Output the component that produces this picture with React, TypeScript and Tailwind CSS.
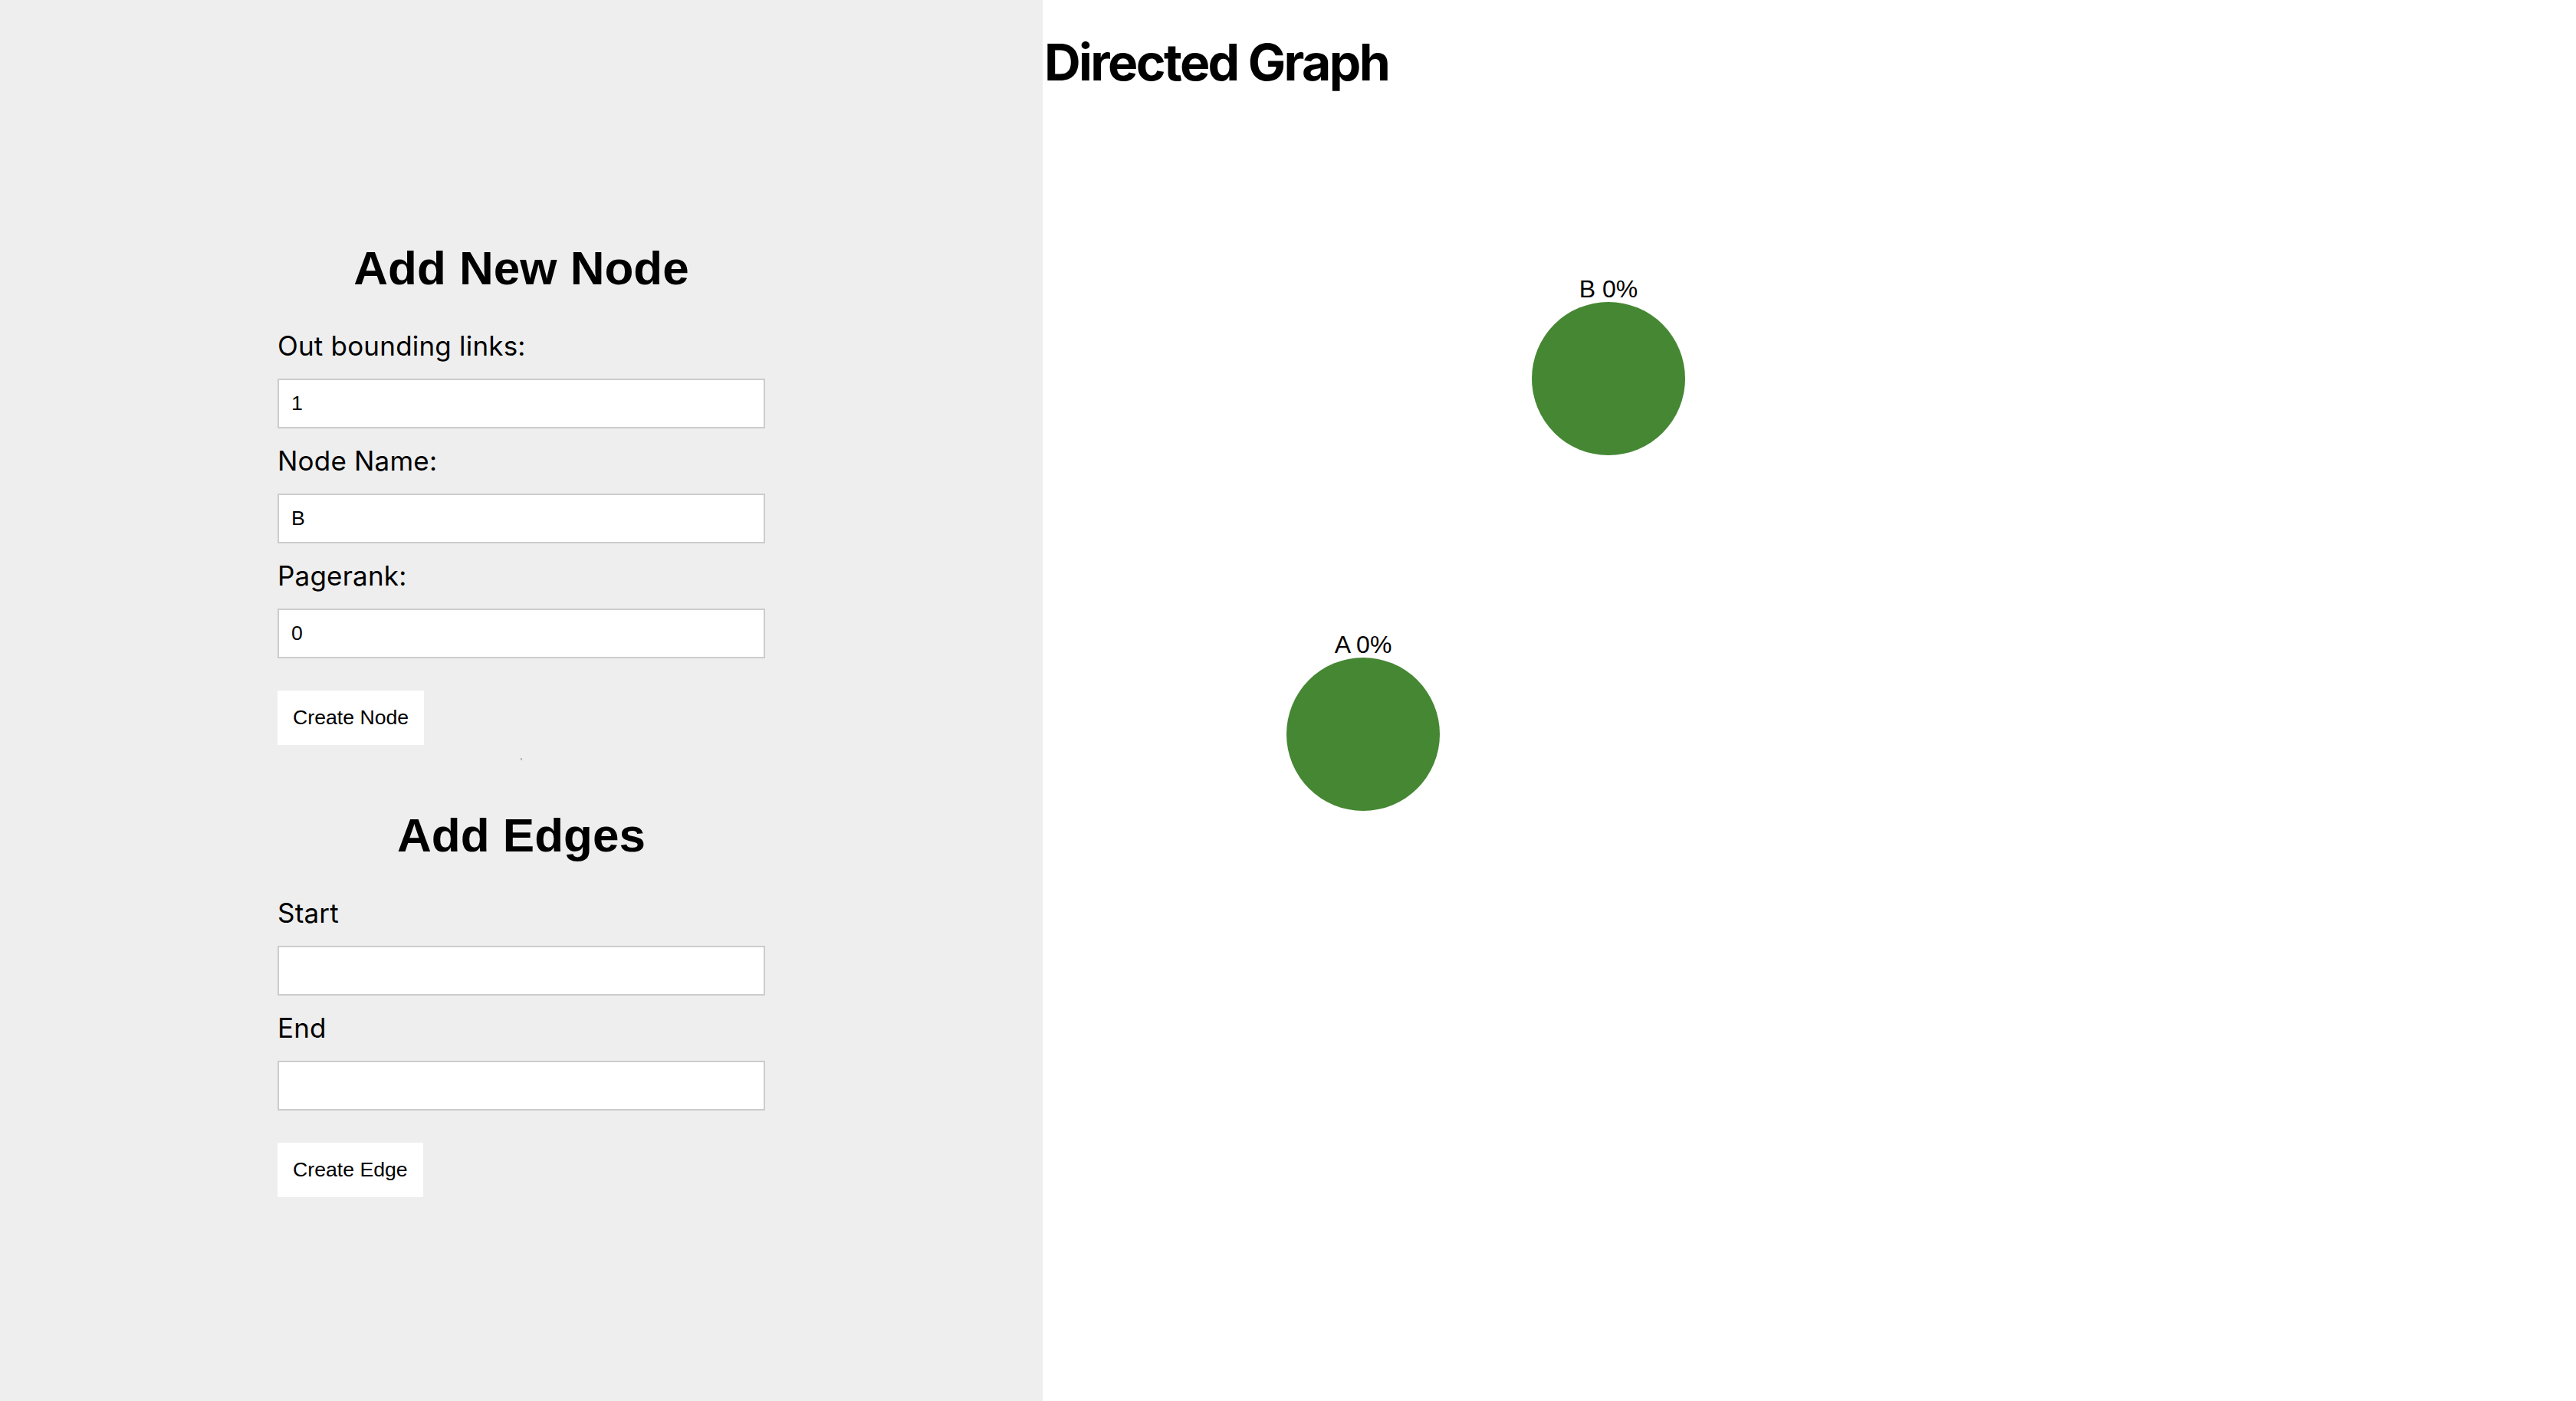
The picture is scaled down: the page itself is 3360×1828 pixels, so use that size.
import React from "react";

// Left panel form field: label + text input
function Field({ label, value, first }: { label: string; value?: string; first?: boolean }) {
  return (
    <>
      <label
        className={`block font-['Inter',sans-serif] text-[35px] leading-[41px] tracking-[0.2px] text-black ${first ? "mt-[45px]" : "mt-[22px]"}`}
      >
        {label}
      </label>
      <input
        type="text"
        defaultValue={value}
        className="mt-[22px] block h-[65px] w-full border-2 border-[#cccccc] bg-white pl-[16px] font-['Liberation_Sans',Arial,sans-serif] text-[26.6667px] text-black outline-none"
      />
    </>
  );
}

function FormButton({ children }: { children: React.ReactNode }) {
  return (
    <button className="mt-[42px] self-start bg-white px-[20px] py-[20px] font-['Liberation_Sans',Arial,sans-serif] text-[26.6667px] leading-[31px] text-black">
      {children}
    </button>
  );
}

const nodes = [
  { name: "B", rank: 0, x: 738, y: 373 },
  { name: "A", rank: 0, x: 418, y: 837 },
];

export default function App() {
  return (
    <div className="flex h-[1828px] w-full overflow-hidden">
      {/* sidebar with the forms */}
      <aside className="w-[1360px] shrink-0 bg-[#eeeeee] pt-[313px]">
        <div className="mx-auto flex w-[636px] flex-col">
          <h2 className="text-center font-['Liberation_Sans',Arial,sans-serif] text-[62px] font-bold leading-[73px] text-black">
            Add New Node
          </h2>
          <Field first label="Out bounding links:" value="1" />
          <Field label="Node Name:" value="B" />
          <Field label="Pagerank:" value="0" />
          <FormButton>Create Node</FormButton>
          <div className="mt-[17px] h-[3px] w-[2px] self-center bg-[#b5b5b5]" />

          <h2 className="mt-[61px] text-center font-['Liberation_Sans',Arial,sans-serif] text-[62px] font-bold leading-[73px] text-black">
            Add Edges
          </h2>
          <Field first label="Start" />
          <Field label="End" />
          <FormButton>Create Edge</FormButton>
        </div>
      </aside>

      {/* graph canvas */}
      <main className="flex flex-1 flex-col bg-white">
        <h1 className="mt-[41px] h-[80px] pl-[2px] font-['Inter',sans-serif] text-[66px] font-bold leading-[80px] tracking-[-2.6px] text-black">
          Directed Graph
        </h1>
        <svg width="2000" height="1707" className="block">
          {nodes.map((n) => (
            <g key={n.name}>
              <text
                x={n.x}
                y={n.y - 106}
                textAnchor="middle"
                fontFamily="'Liberation Sans', Arial, sans-serif"
                fontSize="32"
                fill="#000"
              >
                {n.name} {n.rank}%
              </text>
              <circle cx={n.x} cy={n.y} r="100" fill="#458733" />
            </g>
          ))}
        </svg>
      </main>
    </div>
  );
}
